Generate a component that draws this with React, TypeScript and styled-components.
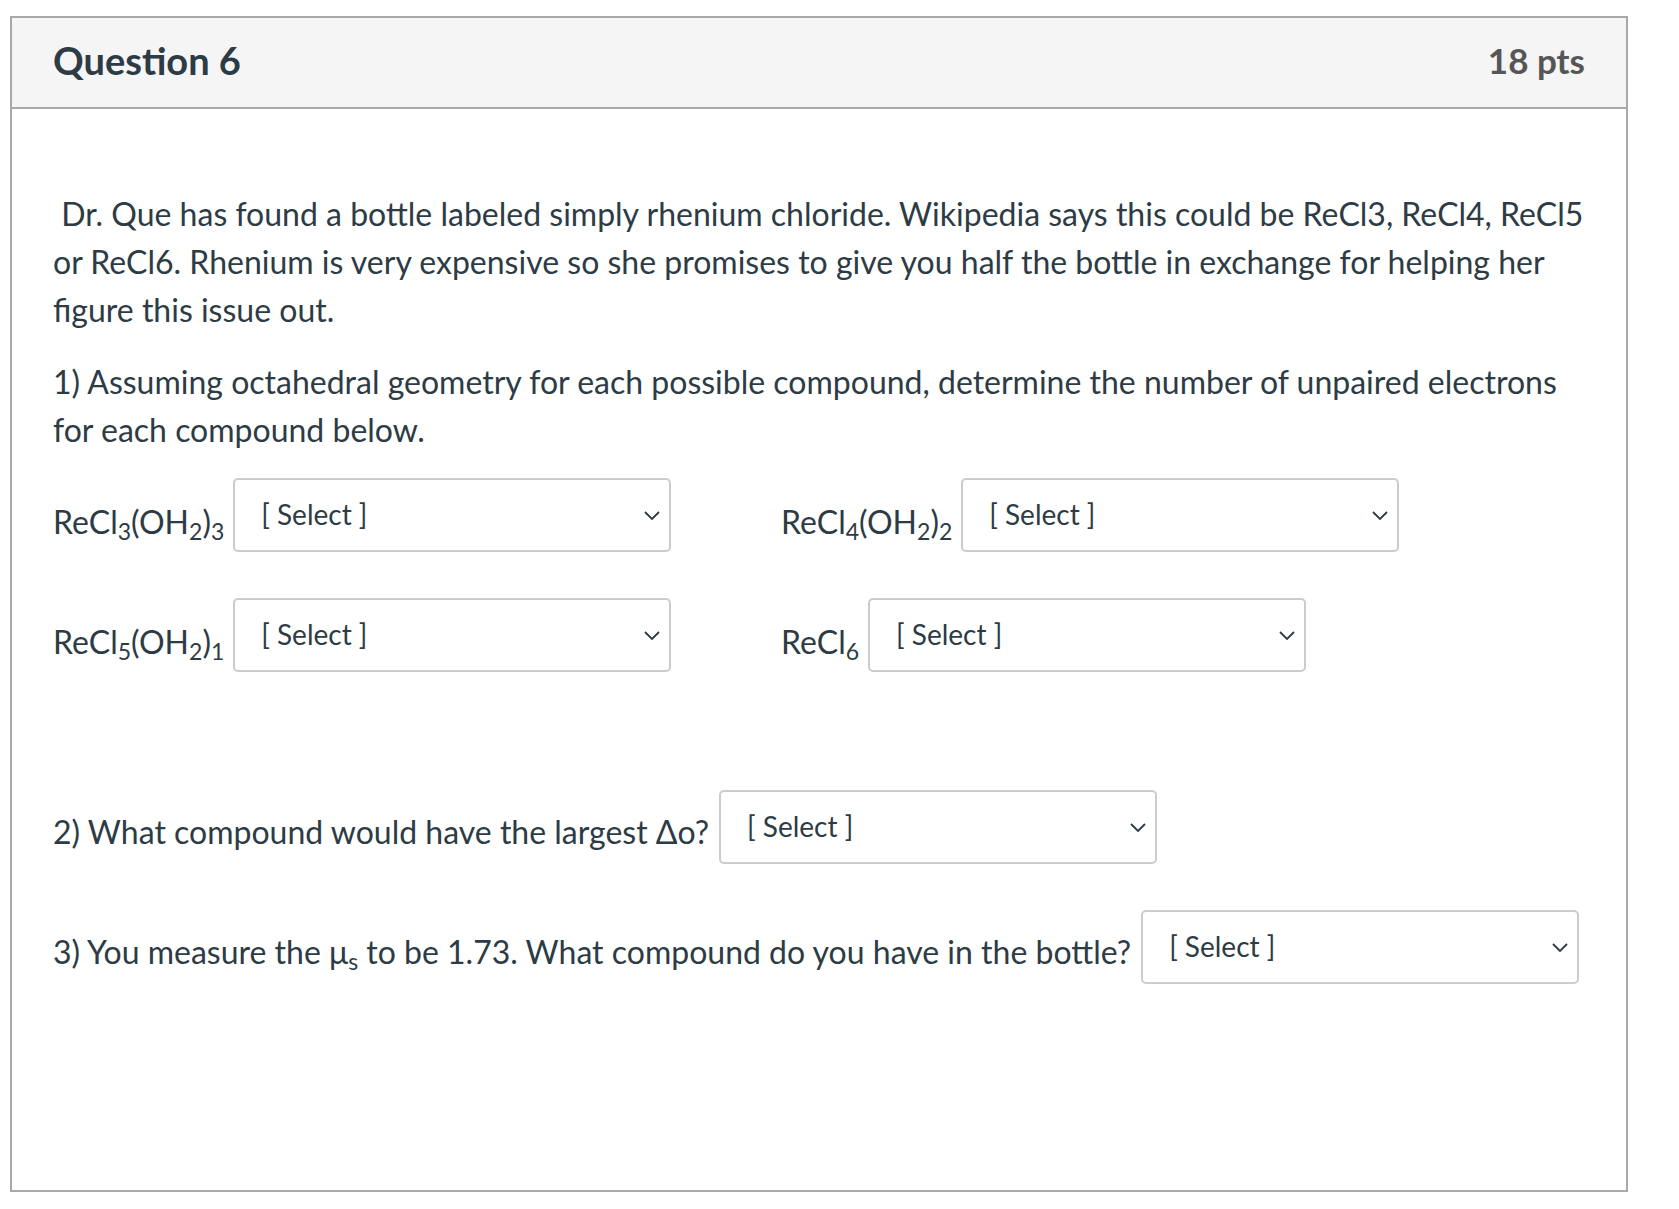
import styled, { createGlobalStyle } from 'styled-components';

const GlobalStyle = createGlobalStyle`
  body {
    margin: 0;
    background: #ffffff;
    font-family: Lato, "Open Sans", sans-serif;
    color: #2d3b45;
  }
`;

function Chevron() {
  return (
    <svg width="16" height="9" viewBox="0 0 16 9" fill="none">
      <polyline points="1,1 8,8 15,1" stroke="#2d3b45" strokeWidth="1.8" />
    </svg>
  );
}

function Dropdown() {
  return (
    <SelectBox role="combobox" aria-expanded="false">
      <SelectText>[ Select ]</SelectText>
      <Chevron />
    </SelectBox>
  );
}

function App() {
  const compounds = [
    { id: 'a', label: <>ReCl<Sub>3</Sub>(OH<Sub>2</Sub>)<Sub>3</Sub></> },
    { id: 'b', label: <>ReCl<Sub>4</Sub>(OH<Sub>2</Sub>)<Sub>2</Sub></> },
    { id: 'c', label: <>ReCl<Sub>5</Sub>(OH<Sub>2</Sub>)<Sub>1</Sub></> },
    { id: 'd', label: <>ReCl<Sub>6</Sub></> },
  ];

  return (
    <Page>
      <GlobalStyle />
      <Card>
        <Header>
          <Title>Question 6</Title>
          <Points>18 pts</Points>
        </Header>
        <Body>
          <Paragraph>
            &nbsp;Dr. Que has found a bottle labeled simply rhenium chloride. Wikipedia says this
            could be ReCl3, ReCl4, ReCl5 or ReCl6. Rhenium is very expensive so she promises to
            give you half the bottle in exchange for helping her figure this issue out.
          </Paragraph>
          <Paragraph>
            1) Assuming octahedral geometry for each possible compound, determine the number of
            unpaired electrons for each compound below.
          </Paragraph>

          <CompoundGrid>
            {compounds.map((c) => (
              <Cell key={c.id}>
                <Label>{c.label}</Label>
                <Dropdown />
              </Cell>
            ))}
          </CompoundGrid>

          <QuestionRow $top={118}>
            <Label $drop={10}>2) What compound would have the largest Δo?</Label>
            <Dropdown />
          </QuestionRow>

          <QuestionRow $top={46}>
            <Label $drop={10}>
              3) You measure the μ<Sub>s</Sub> to be 1.73. What compound do you have in the bottle?
            </Label>
            <Dropdown />
          </QuestionRow>
        </Body>
      </Card>
    </Page>
  );
}

export default App;

const Page = styled.div`
  padding: 16px 0 0 10px;
`;

const Card = styled.div`
  width: 1618px;
  box-sizing: border-box;
  border: 2px solid #a9a9a9;
  background: #ffffff;
`;

const Header = styled.div`
  height: 91px;
  box-sizing: border-box;
  padding: 0 41px 6px;
  display: flex;
  align-items: center;
  justify-content: space-between;
  background: #f5f5f5;
  border-bottom: 2px solid #a9a9a9;
`;

const Title = styled.h2`
  margin: 0;
  font-size: 38px;
  font-weight: 700;
  color: #2d3b45;
`;

const Points = styled.div`
  font-size: 35px;
  font-weight: 700;
  color: #565656;
`;

const Body = styled.div`
  padding: 81px 41px 206px;
`;

const Paragraph = styled.p`
  margin: 0 0 24px;
  font-size: 32px;
  line-height: 48px;
`;

const Sub = styled.sub`
  font-size: 0.72em;
  line-height: 0;
  vertical-align: -0.25em;
`;

const CompoundGrid = styled.div`
  margin-top: 3px;
  display: grid;
  grid-template-columns: 728px auto;
  row-gap: 46px;
`;

const Cell = styled.div`
  display: flex;
  align-items: center;
  gap: 9px;
`;

const QuestionRow = styled.div<{ $top: number }>`
  margin-top: ${({ $top }) => $top}px;
  display: flex;
  align-items: center;
  gap: 10px;
`;

const Label = styled.span<{ $drop?: number }>`
  margin-top: ${({ $drop = 14 }) => $drop}px;
  font-size: 32px;
  line-height: 48px;
  white-space: nowrap;
`;

const SelectBox = styled.div`
  width: 438px;
  height: 74px;
  box-sizing: border-box;
  padding: 0 9px 0 26px;
  display: flex;
  align-items: center;
  justify-content: space-between;
  border: 2px solid #cccccc;
  border-radius: 5px;
  background: #ffffff;
  flex-shrink: 0;
`;

const SelectText = styled.span`
  font-size: 28px;
  color: #2d3b45;
  margin-top: -2px;
`;
